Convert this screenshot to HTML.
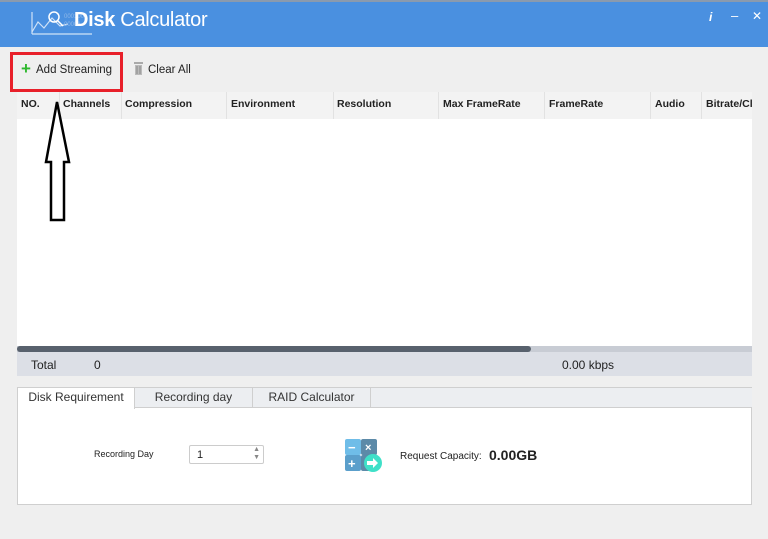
<!DOCTYPE html>
<html><head><style>
*{margin:0;padding:0;box-sizing:border-box}
body{width:768px;height:539px;background:#efefef;font-family:"Liberation Sans","DejaVu Sans",sans-serif;position:relative;overflow:hidden;font-size:11px;color:#222}
.title{position:absolute;left:0;top:0;width:768px;height:47px;background:#4a90e0;border-top:2px solid #8a9aae}
.abs{position:absolute}
.hdr{position:absolute;top:92px;height:27px;background:#f3f3f3;left:17px;width:735px}
.hdr span{position:absolute;top:6px;font-weight:bold;font-size:10.5px;color:#222}
.sep{position:absolute;top:0;width:1px;height:27px;background:#e2e2e2}
.tab{position:absolute;top:387px;height:21px;border:1px solid #cfcfcf;background:#eceef1;font-size:12px;text-align:center;line-height:19px;color:#333}
</style></head><body>
<div class="title">
<svg class="abs" style="left:30px;top:4px" width="80" height="30" viewBox="0 0 80 30">
<polyline points="2,26 8,16 14,22 22,12 30,20 38,18" fill="none" stroke="#cfe2f7" stroke-width="1.2"/>
<line x1="2" y1="28" x2="62" y2="28" stroke="#cfe2f7" stroke-width="1.2"/>
<line x1="2" y1="6" x2="2" y2="28" stroke="#cfe2f7" stroke-width="1.2"/>
<circle cx="24" cy="11" r="5" fill="none" stroke="#fff" stroke-width="1.5"/>
<line x1="28" y1="15" x2="33" y2="20" stroke="#fff" stroke-width="1.5"/>
<text x="34" y="12" font-size="6" fill="#8fb8e8">0001000</text>
<text x="34" y="20" font-size="6" fill="#8fb8e8">00001</text>
</svg>
<div class="abs" style="left:74px;top:7px;font-size:20px;color:#fff;letter-spacing:-0.3px"><b>Disk</b> Calculator</div>
<div class="abs" style="left:709px;top:8px;color:#fff;font-weight:bold;font-style:italic;font-size:12px">i</div>
<div class="abs" style="left:731px;top:6px;color:#fff;font-size:13px">–</div>
<div class="abs" style="left:752px;top:7px;color:#fff;font-size:12px">✕</div>
</div>
<div class="abs" style="left:10px;top:52px;width:113px;height:40px;border:3px solid #e8202a"></div>
<div class="abs" style="left:21px;top:59px;color:#2eb82e;font-weight:bold;font-size:17px">+</div>
<div class="abs" style="left:36px;top:64px;font-size:11.5px">Add Streaming</div>
<svg class="abs" style="left:133px;top:62px" width="11" height="13"><rect x="1" y="0" width="9" height="2" fill="#aaa"/><rect x="2" y="3" width="7" height="10" fill="#bbb"/><line x1="4" y1="4" x2="4" y2="12" stroke="#888"/><line x1="7" y1="4" x2="7" y2="12" stroke="#888"/></svg>
<div class="abs" style="left:148px;top:64px;font-size:11.5px">Clear All</div>
<div class="abs" style="left:17px;top:119px;width:735px;height:227px;background:#fff"></div>
<div class="hdr">
<span style="left:4px">NO.</span><div class="sep" style="left:42px"></div>
<span style="left:46px">Channels</span><div class="sep" style="left:104px"></div>
<span style="left:108px">Compression</span><div class="sep" style="left:209px"></div>
<span style="left:214px">Environment</span><div class="sep" style="left:316px"></div>
<span style="left:320px">Resolution</span><div class="sep" style="left:421px"></div>
<span style="left:426px">Max FrameRate</span><div class="sep" style="left:527px"></div>
<span style="left:532px">FrameRate</span><div class="sep" style="left:633px"></div>
<span style="left:638px">Audio</span><div class="sep" style="left:684px"></div>
<span style="left:689px;white-space:nowrap">Bitrate/Cl</span>
</div>
<svg class="abs" style="left:0;top:0" width="120" height="230"><polygon points="57,102 69,162 64,162 64,220 51,220 51,162 46,162" fill="#fff" stroke="#000" stroke-width="2.5" stroke-linejoin="miter"/></svg>
<div class="abs" style="left:17px;top:346px;width:735px;height:6px;background:#c8ccd4"></div>
<div class="abs" style="left:17px;top:346px;width:514px;height:6px;background:#58616d;border-radius:3px"></div>
<div class="abs" style="left:17px;top:352px;width:735px;height:24px;background:#dcdfe6"></div>
<div class="abs" style="left:31px;top:358px;font-size:12px">Total</div>
<div class="abs" style="left:94px;top:358px;font-size:12px">0</div>
<div class="abs" style="left:562px;top:358px;font-size:12px">0.00 kbps</div>
<div class="abs" style="left:17px;top:407px;width:735px;height:98px;background:#fff;border:1px solid #cfcfcf"></div>
<div class="tab" style="left:17px;width:118px;background:#fff;border-bottom:none;height:22px">Disk Requirement</div>
<div class="tab" style="left:134px;width:119px">Recording day</div>
<div class="tab" style="left:252px;width:119px">RAID Calculator</div>
<div class="tab" style="left:370px;width:382px;border-right:none"></div>
<div class="abs" style="left:94px;top:449px;font-size:9px">Recording Day</div>
<div class="abs" style="left:189px;top:445px;width:75px;height:19px;border:1px solid #ccc;border-radius:2px;background:#fff;font-size:11px;padding:3px 7px">1<span style="position:absolute;right:3px;top:0;font-size:7px;color:#888;line-height:8px">▲<br>▼</span></div>
<svg class="abs" style="left:344px;top:438px" width="42" height="36"><rect x="1" y="1" width="16" height="16" fill="#6fbde8" rx="2"/><rect x="17" y="1" width="16" height="16" fill="#5c8aa8" rx="2"/><rect x="1" y="17" width="16" height="16" fill="#5b9fcb" rx="2"/><rect x="17" y="17" width="16" height="16" fill="#5c8aa8" rx="2"/><text x="4" y="14" fill="#fff" font-size="13" font-weight="bold">−</text><text x="21" y="13" fill="#fff" font-size="11" font-weight="bold">×</text><text x="4" y="30" fill="#fff" font-size="13" font-weight="bold">+</text><circle cx="29" cy="25" r="9" fill="#3fe0c8"/><path d="M23 23h6v-3l5 5-5 5v-3h-6z" fill="#fff"/></svg>
<div class="abs" style="left:400px;top:451px;font-size:10px">Request Capacity:</div>
<div class="abs" style="left:489px;top:447px;font-size:14px;font-weight:bold">0.00GB</div>
</body></html>
